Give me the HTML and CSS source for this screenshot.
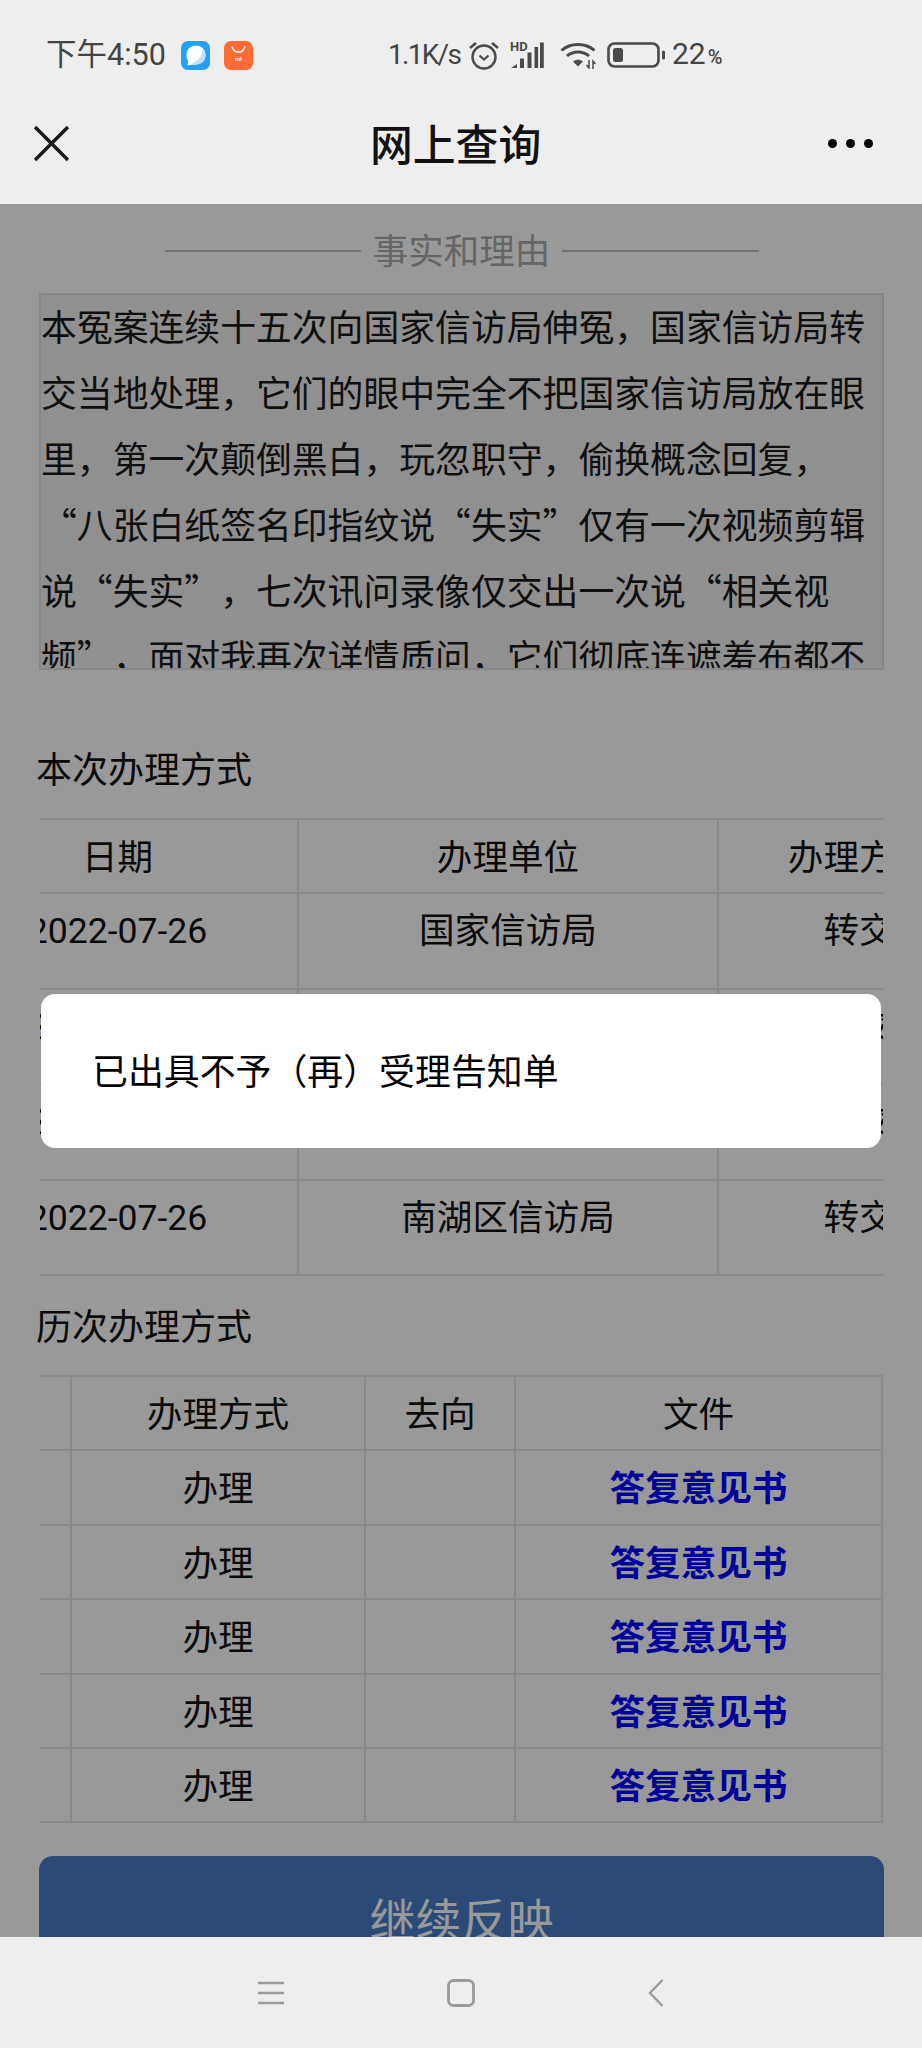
FILE: index.html
```html
<!DOCTYPE html>
<html lang="zh-CN">
<head>
<meta charset="utf-8">
<title>网上查询</title>
<link rel="stylesheet" href="styles.css">
</head>
<body>
<div class="app">
  <div class="status">
    <span class="time">下午4:50</span>
    <svg class="app-icon first" viewBox="0 0 29 29"><defs><linearGradient id="bl" x1="0" y1="0" x2="1" y2="1"><stop offset="0" stop-color="#19a4ff"/><stop offset="1" stop-color="#2f9dfb"/></linearGradient></defs><rect width="29" height="29" rx="7" fill="url(#bl)"/><path d="M15 4.500c5.500 0 9.500 4 9.500 9.500s-4 9.500-9.500 9.500c-2.800 0-6 .3-9 1 1.200-1.800 1.400-3.300.8-5-1-1.600-1.300-3.500-1.300-5.500 0-5.500 4-9.500 9.500-9.500z" fill="#fff"/><path d="M21.500 7.500c.5 6.500-3.500 12-11 15 1.500 1 3.500 1 4.500 1 5.500 0 9.500-4 9.500-9.500 0-2.500-1-4.800-3-6.500z" fill="#bfe2fb"/></svg>
    <svg class="app-icon second" viewBox="0 0 29 29"><rect width="29" height="29" rx="7" fill="#ff6b35"/><path d="M8 5.500c.8 3.800 3.300 5.500 6.500 5.500s5.700-1.700 6.500-5.500" fill="none" stroke="#fff" stroke-width="1.300"/><text x="14.500" y="20" class="mi" text-anchor="middle">mi</text></svg>
    <span class="speed">1.1K/s</span>
    <svg class="alarm" viewBox="0 0 32 30"><circle cx="16" cy="17" r="11.500" fill="none" stroke="#4a4a4a" stroke-width="2.400"/><path d="M11.500 15.500l4.500 4 4.500-4" fill="none" stroke="#4a4a4a" stroke-width="2.200"/><path d="M2 8l6-5M30 8l-6-5" stroke="#4a4a4a" stroke-width="2.600"/></svg>
    <svg class="signal" viewBox="0 0 36 28"><text x="0" y="10" class="hd">HD</text><path d="M1 27l6-4v4zM10 27v-9.500h4V27zM17.500 27V11.500h4V27zM30 27V1.500h3.800V27zM24.500 27V6h3.600v21z" fill="#4a4a4a"/></svg>
    <svg class="wifi" viewBox="0 0 36 28"><path d="M1.500 9.500c9-8 24-8 33 0" fill="none" stroke="#4a4a4a" stroke-width="3"/><path d="M7 15c6-5.500 16-5.500 22 0" fill="none" stroke="#4a4a4a" stroke-width="3"/><path d="M13 20.500c3-2.500 7-2.500 10 0l-5 5z" fill="#4a4a4a"/><path d="M29 19v8l-2.500-3M33 28v-8l2.500 3" fill="none" stroke="#4a4a4a" stroke-width="1.500"/></svg>
    <svg class="battery" viewBox="0 0 58 26"><rect x="1.500" y="1.500" width="50" height="23" rx="6" fill="none" stroke="#4a4a4a" stroke-width="2.600"/><rect x="6" y="6" width="10" height="14" rx="2.500" fill="#4a4a4a"/><rect x="55" y="8.500" width="3" height="9" rx="1.500" fill="#4a4a4a"/></svg>
    <span class="pct">22<small>%</small></span>
  </div>

  <div class="navbar">
    <svg class="close" viewBox="0 0 36 36"><path d="M2 2l32 32M34 2L2 34" stroke="#1a1a1a" stroke-width="3.400" fill="none"/></svg>
    <span class="nav-title">网上查询</span>
    <span class="dots"><i></i><i></i><i></i></span>
  </div>

  <main class="content">
    <div class="legend"><span class="legend-line"></span><span class="legend-text">事实和理由</span><span class="legend-line"></span></div>
    <div class="facts"><div class="facts-text">本冤案连续十五次向国家信访局伸冤，国家信访局转交当地处理，它们的眼中完全不把国家信访局放在眼里，第一次颠倒黑白，玩忽职守，偷换概念回复，“八张白纸签名印指纹说“失实”仅有一次视频剪辑说“失实”，七次讯问录像仅交出一次说“相关视频”，面对我再次详情质问，它们彻底连遮羞布都不</div></div>

    <h2 class="section first-section">本次办理方式</h2>
    <div class="scroller">
      <table class="grid current">
        <colgroup><col class="c-date"><col class="c-unit"><col class="c-way"></colgroup>
        <tr class="head"><td>日期</td><td>办理单位</td><td>办理方式</td></tr>
        <tr class="tall"><td class="num">2022-07-26</td><td>国家信访局</td><td>转交</td></tr>
        <tr class="tall"><td class="num">2022-07-26</td><td></td><td>转交</td></tr>
        <tr class="tall"><td class="num">2022-07-26</td><td></td><td>转交</td></tr>
        <tr class="tall"><td class="num">2022-07-26</td><td>南湖区信访局</td><td>转交</td></tr>
      </table>
    </div>

    <h2 class="section second-section">历次办理方式</h2>
    <div class="scroller">
      <table class="grid history">
        <colgroup><col class="h-a"><col class="h-b"><col class="h-c"><col class="h-d"></colgroup>
        <tr class="row"><td></td><td>办理方式</td><td>去向</td><td>文件</td></tr>
        <tr class="row"><td></td><td>办理</td><td></td><td><a class="file">答复意见书</a></td></tr>
        <tr class="row"><td></td><td>办理</td><td></td><td><a class="file">答复意见书</a></td></tr>
        <tr class="row"><td></td><td>办理</td><td></td><td><a class="file">答复意见书</a></td></tr>
        <tr class="row"><td></td><td>办理</td><td></td><td><a class="file">答复意见书</a></td></tr>
        <tr class="row"><td></td><td>办理</td><td></td><td><a class="file">答复意见书</a></td></tr>
      </table>
    </div>

    <button class="primary">继续反映</button>

    <div class="mask">
      <div class="dialog">已出具不予（再）受理告知单</div>
    </div>
  </main>

  <div class="sysnav">
    <svg class="sys-menu" viewBox="0 0 26 24"><path d="M0 2h26M0 12h26M0 22h26" stroke="#9a9a9a" stroke-width="2.600" fill="none"/></svg>
    <svg class="sys-home" viewBox="0 0 28 28"><rect x="1.500" y="1.500" width="25" height="25" rx="5" fill="none" stroke="#9a9a9a" stroke-width="2.800"/></svg>
    <svg class="sys-back" viewBox="0 0 16 28"><path d="M14.500 1L2 14l12.500 13" fill="none" stroke="#9a9a9a" stroke-width="2.400"/></svg>
  </div>
</div>
</body>
</html>
```

FILE: styles.css
```css
* { box-sizing: border-box; }
html, body { margin: 0; padding: 0; }
body {
  width: 922px;
  height: 2048px;
  overflow: hidden;
  background: #fff;
  font-family: "Noto Sans CJK SC", Roboto, sans-serif;
  color: #000;
  text-spacing-trim: space-all;
}
.app { display: flex; flex-direction: column; height: 2048px; }

/* status bar */
.status {
  flex: none;
  height: 84px;
  padding: 26px 0 0 46px;
  display: flex;
  align-items: center;
  background: #eee;
  color: #444;
  font-family: Roboto, "Noto Sans CJK SC", sans-serif;
  font-size: 30px;
  line-height: 36px;
}
.time { width: 119px; white-space: nowrap; font-size: 30.500px; }
.app-icon { width: 29px; height: 29px; flex: none; }
.first { margin-left: 16px; }
.second { margin-left: 14px; }
.mi { font: 700 6px Roboto, sans-serif; fill: #fff; }
.speed { margin-left: 135px; width: 73px; white-space: nowrap; font-size: 28px; letter-spacing: -1.700px; }
.alarm { width: 32px; height: 30px; margin-left: 7px; flex: none; }
.signal { width: 36px; height: 28px; margin-left: 10px; flex: none; }
.hd { font: 700 13px Roboto, sans-serif; fill: #4a4a4a; }
.wifi { width: 36px; height: 28px; margin-left: 14px; flex: none; }
.battery { width: 58px; height: 26px; margin-left: 11px; flex: none; }
.pct { margin-left: 7px; white-space: nowrap; font-size: 30px; }
.pct small { font-size: 20px; margin-left: 2px; font-weight: 500; }

/* navbar */
.navbar {
  flex: none;
  height: 120px;
  padding: 0 49px 2px 33px;
  display: flex;
  align-items: center;
  background: #eee;
}
.close { width: 37px; height: 37px; flex: none; }
.nav-title { margin: 0 0 3px 300px; font-size: 42.800px; font-weight: 500; color: #111; line-height: 56px; }
.dots { margin-left: auto; display: flex; gap: 9px; }
.dots i { display: block; width: 9px; height: 9px; border-radius: 50%; background: #000; }

/* scrolled content */
.content {
  flex: 1;
  min-height: 0;
  position: relative;
  overflow: hidden;
  padding: 24px 38px 0 39px;
  background: #fff;
}
.legend {
  width: 594px;
  height: 46px;
  margin: 0 auto;
  display: flex;
  align-items: center;
  gap: 12px;
}
.legend-line { flex: 1; height: 2px; background: #c0c0c0; }
.legend-text { margin-bottom: 4px; font-size: 35.500px; line-height: 46px; color: #a8a8a8; white-space: nowrap; }
.facts {
  height: 377px;
  margin-top: 19px;
  overflow: hidden;
  background: #f0f0f0;
  border: 2px solid #e2e2e2;
  font-size: 35.850px;
  line-height: 66px;
  color: #1a1a1a;
}
.facts-text { margin-top: -3px; }
.section {
  margin: 0 0 0 -3px;
  font-size: 36px;
  font-weight: 400;
  line-height: 50px;
  color: #111;
}
.first-section { margin-top: 72px; }
.second-section { margin-top: 23px; }
.scroller { margin: 26px 0 0 1px; width: 843px; overflow: hidden; }
.grid {
  table-layout: fixed;
  border-collapse: collapse;
  font-size: 35.600px;
  color: #111;
}
.grid td {
  padding: 1px 0 0;
  border: 2px solid #e6e6e6;
  text-align: center;
  vertical-align: top;
  line-height: 66px;
  white-space: nowrap;
  overflow: hidden;
}
.current { width: 1063px; margin-left: -104px; }
.c-date { width: 361px; }
.c-unit { width: 420px; }
.c-way { width: 282px; }
.head td { height: 74px; line-height: 70px; padding-top: 0; }
.tall td { height: 95.500px; }
.tall .num { font-family: Roboto, sans-serif; line-height: 72px; }
.history { width: 941px; margin-left: -100px; }
.h-a { width: 130px; }
.h-b { width: 294px; }
.h-c { width: 150px; }
.h-d { width: 367px; }
.row td { height: 74.400px; line-height: 68px; }
.file { color: #00f; font-weight: 700; }
.primary {
  display: block;
  width: 845px;
  height: 122px;
  margin-top: 33px;
  padding: 0;
  border: 0;
  border-radius: 14px;
  background: #487cc8;
  color: #fff;
  font-family: inherit;
  font-size: 46px;
  line-height: 116px;
}

/* modal */
.mask {
  position: absolute;
  inset: 0;
  display: flex;
  align-items: center;
  justify-content: center;
  background: rgba(0, 0, 0, .4);
}
.dialog {
  width: 840px;
  height: 154px;
  padding-left: 51px;
  border-radius: 14px;
  background: #fff;
  font-size: 35.900px;
  line-height: 151px;
  color: #000;
}

/* system navigation */
.sysnav {
  flex: none;
  height: 111px;
  padding-top: 42px;
  display: flex;
  align-items: flex-start;
  background: #eee;
}
.sys-menu { width: 26px; height: 24px; margin: 2px 0 0 258px; flex: none; }
.sys-home { width: 28px; height: 28px; margin-left: 163px; flex: none; }
.sys-back { width: 16px; height: 28px; margin-left: 173px; flex: none; }
```
